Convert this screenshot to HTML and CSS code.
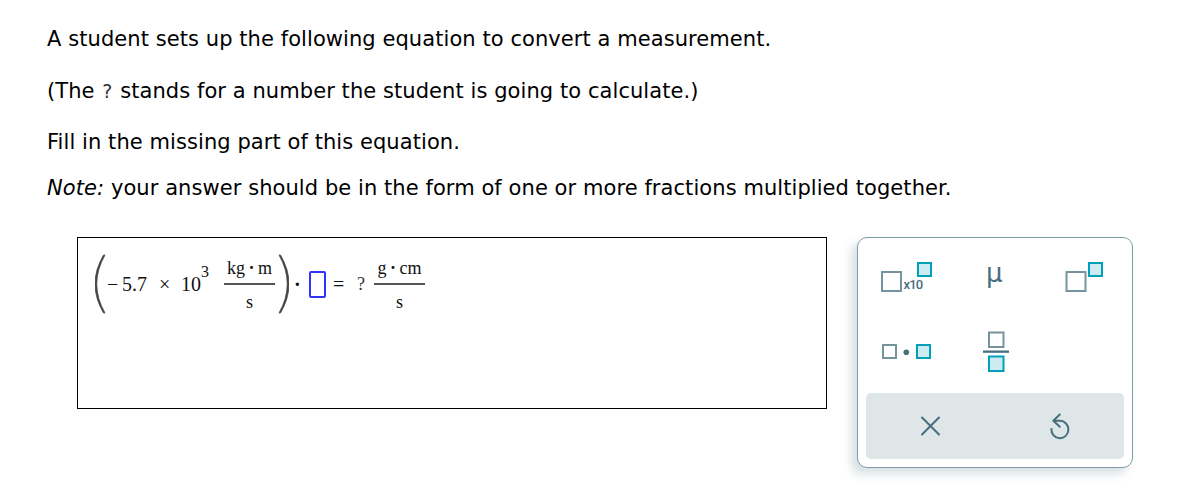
FILE: index.html
```html
<!DOCTYPE html>
<html lang="en">
<head>
    <meta charset="UTF-8">
    <meta name="viewport" content="width=device-width, initial-scale=1.0">
    <title>Unit conversion</title>
    <link rel="stylesheet" href="styles.css">
</head>
<body>
    <div class="question">
        <p class="line-1">A student sets up the following equation to convert a measurement.</p>
        <p class="line-2">(The <span class="unknown">?</span> stands for a number the student is going to calculate.)</p>
        <p class="line-3">Fill in the missing part of this equation.</p>
        <p class="line-4"><em>Note:</em> your answer should be in the form of one or more fractions multiplied together.</p>
    </div>

    <div class="workspace">
        <div class="answer-box">
            <div class="equation">
                <svg class="paren" width="11" height="60" viewBox="0 0 11 60"><path d="M10 1Q-6.500 30 10 59L8.500 59Q-8.500 30 8.500 1Z"/></svg>
                <span class="minus">−</span>
                <span class="coefficient">5.7</span>
                <span class="times">×</span>
                <span class="power">10<sup>3</sup></span>
                <span class="fraction">
                    <span class="top">kg<b>·</b>m</span>
                    <span class="bottom">s</span>
                </span>
                <svg class="paren close" width="11" height="60" viewBox="0 0 11 60"><path d="M1 1Q17.500 30 1 59L2.500 59Q19.500 30 2.500 1Z"/></svg>
                <span class="dot">·</span>
                <span class="blank"></span>
                <span class="equals">=</span>
                <span class="result">?</span>
                <span class="fraction">
                    <span class="top">g<b>·</b>cm</span>
                    <span class="bottom">s</span>
                </span>
            </div>
        </div>

        <div class="palette">
            <div class="tools">
                <button type="button" aria-label="Scientific notation">
                    <svg width="60" height="60">
                        <rect class="base" x="3" y="25" width="19" height="19"/>
                        <text class="x10" x="24.500" y="42">x10</text>
                        <rect class="slot" x="39" y="16" width="13" height="13"/>
                    </svg>
                </button>
                <button type="button" aria-label="Micro">
                    <svg width="60" height="60">
                        <text class="mu" x="21" y="35">µ</text>
                    </svg>
                </button>
                <button type="button" aria-label="Exponent">
                    <svg width="60" height="60">
                        <rect class="base" x="15.500" y="25" width="19" height="19"/>
                        <rect class="slot" x="38" y="16" width="13" height="13"/>
                    </svg>
                </button>
                <button type="button" aria-label="Multiply">
                    <svg width="60" height="60">
                        <rect class="base" x="4" y="21" width="13" height="13"/>
                        <circle class="ink" cx="27.300" cy="28.300" r="2.800"/>
                        <rect class="slot" x="38" y="21" width="13" height="13"/>
                    </svg>
                </button>
                <button type="button" aria-label="Fraction">
                    <svg width="60" height="60">
                        <rect class="base" x="24" y="8.500" width="14.500" height="14.500"/>
                        <rect class="ink" x="18" y="26.500" width="26" height="2.300"/>
                        <rect class="slot" x="24" y="32.500" width="14.500" height="14.500"/>
                    </svg>
                </button>
            </div>
            <div class="actions">
                <button type="button" aria-label="Clear">
                    <svg width="26" height="30"><path d="M4 6.500L21 23.500M21 6.500L4 23.500"/></svg>
                </button>
                <button type="button" aria-label="Undo">
                    <svg width="26" height="30"><path d="M12.800 3.500L6.300 9.800L12.800 15.800M6.500 9.800H13A8.500 8.700 0 1 1 4.400 18"/></svg>
                </button>
            </div>
        </div>
    </div>
</body>
</html>
```
FILE: styles.css
```css
body {
    margin: 0;
    padding: 23px 0 18px 47px;
    background: white;
    color: #000;
    font-family: "DejaVu Sans", Verdana, sans-serif;
    font-size: 21px;
}
p {
    margin: 0;
    height: 32px;
    line-height: 32px;
    white-space: nowrap;
    letter-spacing: 0.07px;
}
.line-1 {
    margin-bottom: 20px;
}
.line-2 {
    margin-bottom: 19px;
}
.line-3 {
    margin-bottom: 14px;
}
.unknown {
    margin: 0 1px;
    color: #333;
    font-size: 19px;
}
.workspace {
    display: flex;
    align-items: flex-start;
    gap: 30px;
    margin: 33px 0 0 30px;
}
.answer-box {
    box-sizing: border-box;
    width: 750px;
    height: 172px;
    border: 1px solid #000;
}
.equation {
    display: flex;
    align-items: center;
    height: 60px;
    padding: 16px 0 0 17px;
    font-family: "Liberation Serif", serif;
    font-size: 20px;
    line-height: 24px;
    color: #111;
}
.paren {
    fill: #444;
    stroke: #444;
    stroke-width: 0.8;
}
.minus {
    width: 15px;
    margin-left: 1px;
}
.coefficient {
    width: 37px;
}
.times {
    width: 22px;
}
.power {
    width: 43px;
}
sup {
    display: inline-block;
    line-height: 0;
    font-size: 16px;
    vertical-align: 14px;
}
.fraction {
    width: 51px;
    font-size: 18px;
    text-align: center;
}
.top, .bottom {
    display: block;
    height: 29px;
    line-height: 29px;
}
.top {
    border-bottom: 2px solid #555;
}
.bottom {
    line-height: 35px;
}
b {
    display: inline-block;
    width: 13px;
}
.close {
    margin-left: 3px;
}
.dot {
    width: 15px;
    margin-left: 5px;
    font-weight: bold;
}
.blank {
    box-sizing: border-box;
    width: 17px;
    height: 27px;
    border: 2px solid #33f;
    border-radius: 2px;
}
.equals {
    width: 24px;
    margin-left: 7px;
}
.result {
    width: 17px;
    font-size: 18px;
    color: #333;
}
.palette {
    box-sizing: border-box;
    width: 276px;
    height: 231px;
    padding: 0 8px;
    border: 1px solid #7e9ca5;
    border-radius: 10px;
    background: white;
    box-shadow: -6px 6px 10px rgba(60, 100, 115, 0.2);
}
button {
    display: flex;
    align-items: center;
    justify-content: center;
    padding: 0;
    border: none;
    background: none;
}
.tools {
    display: grid;
    grid-template-columns: repeat(3, 86px);
    grid-template-rows: 78px 76px;
    margin-bottom: 1px;
}
.base {
    fill: white;
    stroke: #76949d;
    stroke-width: 2;
}
.slot {
    fill: #cdecf2;
    stroke: #009fba;
    stroke-width: 2;
}
.ink, .x10, .mu {
    fill: #456f7e;
}
.x10 {
    font: 500 13px Roboto, sans-serif;
    letter-spacing: -0.8px;
}
.mu {
    font: 26px "DejaVu Sans", sans-serif;
}
.actions {
    display: flex;
    height: 66px;
    border-radius: 5px;
    background: #dfe6e8;
}
.actions button {
    flex: 1;
}
.actions path {
    fill: none;
    stroke: #456f7e;
    stroke-width: 2;
    stroke-linecap: round;
    stroke-linejoin: round;
}
```
